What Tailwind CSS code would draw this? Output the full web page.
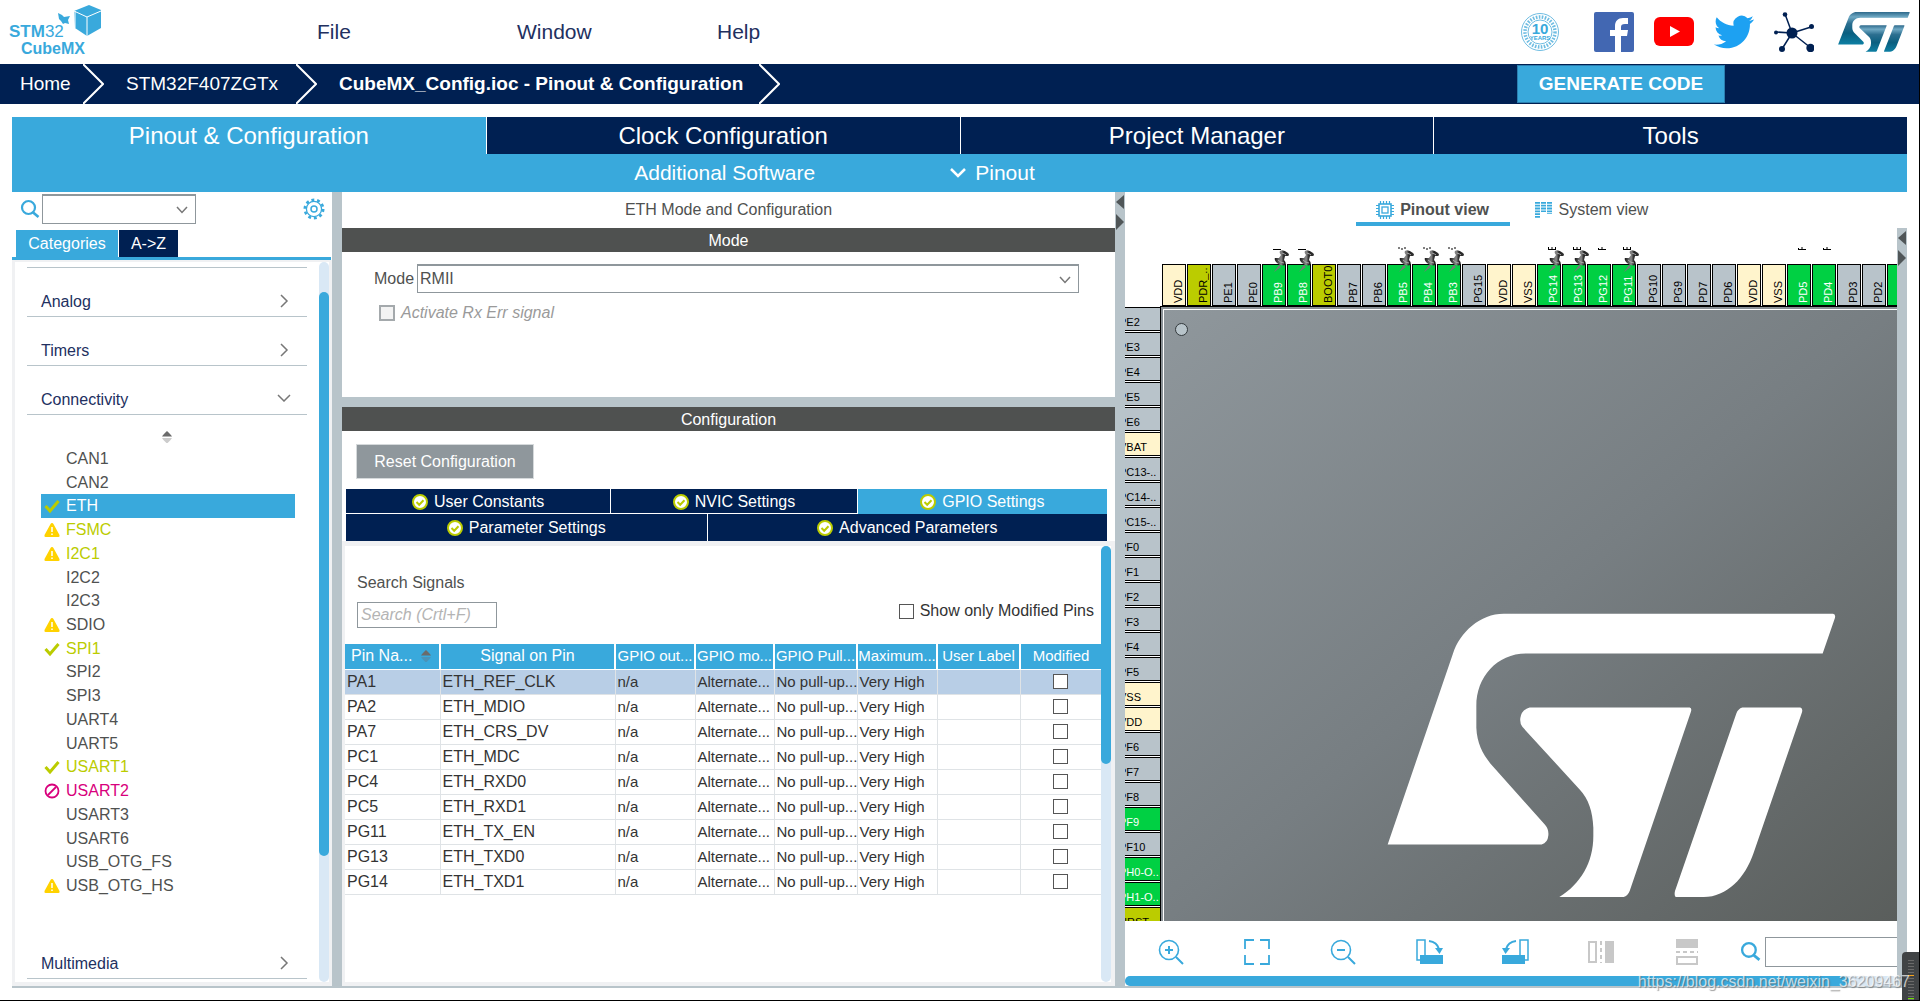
<!DOCTYPE html>
<html lang="en">
<head>
<meta charset="utf-8">
<title>STM32CubeMX - CubeMX_Config.ioc</title>
<script src="https://cdn.jsdelivr.net/npm/@tailwindcss/browser@4"></script>
</head>
<body class="relative flex h-screen flex-col overflow-hidden border-r border-b border-black bg-white font-['Liberation_Sans',Arial,sans-serif] text-[16px] leading-5 text-[#4f5150]">

<svg class="absolute size-0" aria-hidden="true">
  <defs>
    <linearGradient id="stFill" x1="0" y1="0" x2="0" y2="1"><stop offset="0" stop-color="#2f6a8c"/><stop offset=".15" stop-color="#6fa9c4"/><stop offset=".35" stop-color="#2c6f90"/><stop offset=".65" stop-color="#0a5f80"/><stop offset="1" stop-color="#0d7fa3"/></linearGradient>
    <linearGradient id="pinBody" x1="0" y1="0" x2="1" y2="0"><stop offset="0" stop-color="#111"/><stop offset=".45" stop-color="#8c8c8c"/><stop offset=".65" stop-color="#222"/><stop offset="1" stop-color="#333"/></linearGradient>
    <symbol id="st" viewBox="50 70 1350 856" preserveAspectRatio="none">
      <path d="M52 765L248 192C268 128 330 72 400 72H1388Q1396 72 1394 84L1357 192H468C380 192 318 262 318 350V415C320 460 336 492 360 522L524 706Q536 720 534 738Q532 760 514 765Z"/>
      <path d="M478 354H958Q965 356 962 366L778 905Q772 920 760 923H567C630 885 669 820 669 740V715C667 665 655 630 628 600L456 412Q448 402 450 385Q454 360 478 354Z"/>
      <path d="M1116 354H1290Q1298 356 1295 368L1150 790C1125 865 1070 923 1000 923H916Q911 918 914 905L1098 372Q1103 358 1116 354Z"/>
    </symbol>
    <symbol id="okBadge" viewBox="0 0 16 16"><circle cx="8" cy="8" r="7" fill="#fff" stroke="#bbcc00" stroke-width="2"/><path d="M4.500 8l2.700 2.700L11.500 6.200" fill="none" stroke="#bbcc00" stroke-width="2"/></symbol>
    <symbol id="check" viewBox="0 0 16 16"><path d="M1.500 8l4.500 5L14.500 3" fill="none" stroke="#bbcc00" stroke-width="3"/></symbol>
    <symbol id="warn" viewBox="0 0 16 16"><path d="M8 1Q9 1 9.600 2.200L15.500 13Q16 15 14.500 15H1.500Q0 15 .500 13L6.400 2.200Q7 1 8 1Z" fill="#ffd200"/><path d="M8 5v5M8 11.500v1.500" stroke="#fff" stroke-width="1.500"/></symbol>
    <symbol id="ban" viewBox="0 0 16 16"><circle cx="8" cy="8" r="6.500" fill="none" stroke="#d8007c" stroke-width="1.800"/><path d="M4 12L12 4" stroke="#d8007c" stroke-width="1.800"/></symbol>
    <symbol id="lens" viewBox="0 0 20 20"><circle cx="8.500" cy="8.500" r="6.500" fill="none" stroke="#39a9dc" stroke-width="2.200"/><path d="M12.500 13l6 5" stroke="#39a9dc" stroke-width="2.600"/></symbol>
    <symbol id="sort" viewBox="0 0 10 12"><path d="M0 5.500Q1 3.500 5 0Q9 3.500 10 5.500Z" fill="#6b6b6b"/><path d="M0 7H10Q9 9 5 12.500Q1 9 0 7Z" fill="currentColor"/></symbol>
    <symbol id="pushpin" viewBox="0 0 17 23"><path d="M6 15L1 22L8 17Z" fill="#777"/><path d="M7 1Q10-1 15 3Q17 5 15 6L12 6L11 10Q14 13 12 15Q8 17 3 12Q1 9 2 8L6 8L8 5Q6 3 7 1Z" fill="url(#pinBody)"/><path d="M9 3Q12 4 13 5M5 10Q8 13 11 13" stroke="#aaa" fill="none"/></symbol>
    <symbol id="sash" viewBox="0 0 10 40"><path d="M9 3V17L1 10Z" fill="#505658"/><path d="M1 22V38L9 30Z" fill="#505658"/></symbol>
  </defs>
</svg>

<header class="flex h-16 shrink-0 items-center text-[#22305f]">
  <a href="#" aria-label="STM32 CubeMX" class="w-[317px]">
    <svg class="h-16 w-[110px]" viewBox="0 0 110 64" fill="#39a9dc" font-family="'Liberation Sans Narrow','Liberation Sans',sans-serif" font-size="16">
      <text x="9" y="37" font-size="17"><tspan font-weight="700">STM</tspan><tspan>32</tspan></text>
      <text x="21" y="54" font-weight="700">CubeMX</text>
      <path d="M74 11L89 5l12 5v18L87 36 75 28Z"/><path d="M74 11l13 6 14-6M87 17V36M75 11v17" fill="none" stroke="#fff" stroke-width="1"/>
      <path d="M58 13l4 2 2 2 6-1-2 4 1 4-4-1-2 1-2-3-2-2Z"/>
    </svg>
  </a>
  <nav class="grid grid-cols-[200px_200px_120px] text-[21px]">
    <a href="#">File</a><a href="#">Window</a><a href="#">Help</a>
  </nav>
  <div class="ml-auto flex items-center gap-5 pr-[9px]">
    <a href="#" aria-label="10 years" class="mr-3.5"><svg class="size-10" viewBox="0 0 40 40" fill="none" stroke="#6fbde2">
      <circle cx="20" cy="20" r="18.500"/><circle cx="20" cy="20" r="15" stroke-width="3.500" stroke-dasharray="1.600 1.400"/><circle cx="20" cy="20" r="12"/>
      <text x="20" y="22" text-anchor="middle" font-size="15" font-weight="700" fill="#39a9dc" stroke="none">10</text>
      <text x="20" y="28" text-anchor="middle" font-size="6" font-weight="700" fill="#39a9dc" stroke="none">YEARS</text></svg></a>
    <a href="#" aria-label="Facebook"><svg class="size-10" viewBox="0 0 40 40"><rect width="40" height="40" rx="2" fill="#4267b2"/><path d="M21 40V24h-5v-6h5v-4c0-5 3-8 8-8h5v6h-3c-3 0-4 1-4 3v3h7l-1 6h-6v16Z" fill="#fff"/></svg></a>
    <a href="#" aria-label="YouTube"><svg class="size-10" viewBox="0 0 40 40"><rect y="5" width="40" height="29" rx="6" fill="red"/><path d="M16 14v11l10-5.500Z" fill="#fff"/></svg></a>
    <a href="#" aria-label="Twitter"><svg class="size-10" viewBox="0 0 24 24" fill="#1da1f2"><path d="M23.953 4.570a10 10 0 01-2.825.775 4.958 4.958 0 002.163-2.723c-.951.555-2.005.959-3.127 1.184a4.920 4.920 0 00-8.384 4.482C7.690 8.095 4.067 6.130 1.640 3.162a4.822 4.822 0 00-.666 2.475c0 1.710.870 3.213 2.188 4.096a4.904 4.904 0 01-2.228-.616v.060a4.923 4.923 0 003.946 4.827 4.996 4.996 0 01-2.212.085 4.936 4.936 0 004.604 3.417 9.867 9.867 0 01-6.102 2.105c-.390 0-.779-.023-1.170-.067a13.995 13.995 0 007.557 2.209c9.053 0 13.998-7.496 13.998-13.985 0-.210 0-.420-.015-.630A9.935 9.935 0 0024 4.590z"/></svg></a>
    <a href="#" aria-label="Community"><svg class="size-10" viewBox="0 0 40 40" fill="#002052" stroke="#002052" stroke-width="1.500"><path d="M18 21L11 2M18 21L37 15M18 21L2 20M18 21L8 37M18 21L37 36"/><g stroke="none"><circle cx="18" cy="21" r="5.500"/><circle cx="11" cy="2.500" r="2.300"/><circle cx="37.500" cy="14.500" r="2.500"/><circle cx="2" cy="20.500" r="2"/><circle cx="8" cy="37" r="3"/><circle cx="36.500" cy="36" r="4.200"/></g></svg></a>
    <a href="#" aria-label="STMicroelectronics" class="ml-1"><svg class="h-10 w-[72px]" fill="url(#stFill)"><use href="#st" width="72" height="40"/></svg></a>
  </div>
</header>

<nav class="flex h-10 shrink-0 items-center bg-[#002052] text-[19px] text-white" aria-label="Breadcrumb">
  <a href="#" class="w-[83px] pl-5">Home</a>
  <svg class="h-10 w-[21px]" viewBox="0 0 21 40" fill="none" stroke="#fff" stroke-width="2"><path d="M0 0L20 20L0 40"/></svg>
  <a href="#" class="w-[192px] pl-[22px]">STM32F407ZGTx</a>
  <svg class="h-10 w-[21px]" viewBox="0 0 21 40" fill="none" stroke="#fff" stroke-width="2"><path d="M0 0L20 20L0 40"/></svg>
  <a href="#" class="w-[442px] pl-[22px] font-bold whitespace-nowrap">CubeMX_Config.ioc - Pinout &amp; Configuration</a>
  <svg class="h-10 w-[21px]" viewBox="0 0 21 40" fill="none" stroke="#fff" stroke-width="2"><path d="M0 0L20 20L0 40"/></svg>
  <button class="mr-[194px] ml-auto h-[38px] w-[208px] border border-[#2b7fb0] bg-[#39a9dc] font-bold">GENERATE CODE</button>
</nav>

<main class="mx-3 mt-[13px] mb-3 flex min-h-0 flex-1 flex-col">
  <div class="grid h-[37px] shrink-0 grid-cols-4 text-[24px] text-white" role="tablist">
    <button role="tab" aria-selected="true" class="bg-[#39a9dc]">Pinout &amp; Configuration</button>
    <button role="tab" class="border-l border-white bg-[#002052]">Clock Configuration</button>
    <button role="tab" class="border-l border-white bg-[#002052]">Project Manager</button>
    <button role="tab" class="border-l border-white bg-[#002052]">Tools</button>
  </div>
  <div class="flex h-[38px] shrink-0 items-center justify-center gap-[134px] bg-[#39a9dc] pr-[250px] text-[21px] text-white">
    <button>Additional Software</button>
    <button class="flex items-center gap-2"><svg class="h-3 w-[18px]" viewBox="0 0 18 12" fill="none" stroke="#fff" stroke-width="2.500"><path d="M2 2l7 7 7-7"/></svg>Pinout</button>
  </div>

  <div class="flex min-h-0 flex-1 border-b-2 border-[#b8c4ca]">

    <aside class="flex w-[320px] shrink-0 flex-col">
      <div class="flex h-[38px] shrink-0 items-center pr-[7px] pb-1 pl-2">
        <svg class="size-5"><use href="#lens"/></svg>
        <div class="relative ml-0.5 h-[30px] w-[154px]">
          <select aria-label="Search peripheral" class="h-full w-full appearance-none border border-t-2 border-[#8f979c] bg-white"><option></option></select>
          <svg class="pointer-events-none absolute top-3 right-2 h-2 w-3" viewBox="0 0 12 8" fill="none" stroke="#777" stroke-width="1.500"><path d="M1 1l5 5.500L11 1"/></svg>
        </div>
        <button aria-label="Settings" class="ml-auto"><svg class="size-[22px]" viewBox="0 0 22 22" fill="none" stroke="#39a9dc"><circle cx="11" cy="11" r="9.200" stroke-width="2.600" stroke-dasharray="2.890 2.890"/><circle cx="11" cy="11" r="7.600" stroke-width="1.300"/><circle cx="11" cy="11" r="3" stroke-width="1.500"/></svg></button>
      </div>
      <div class="ml-1 flex h-[27px] shrink-0 gap-px text-white" role="tablist">
        <button role="tab" aria-selected="true" class="w-[102px] bg-[#39a9dc]">Categories</button>
        <button role="tab" class="w-[59px] bg-[#002052]">A-&gt;Z</button>
      </div>
      <div class="mr-px h-[3px] shrink-0 bg-[#39a9dc]"></div>
      <div class="flex min-h-0 flex-1 border-x-[3px] border-t-2 border-b-4 border-[#f0f1f3]">
        <div class="flex flex-1 flex-col px-3 pt-[5px] text-[#22305f]">
          <div class="h-px shrink-0 bg-[#b8c4ca]"></div>
          <button class="flex h-[49px] shrink-0 items-end justify-between border-b border-[#b8c4ca] pr-[18px] pb-1 pl-3.5">Analog<svg class="mb-1 h-3.5 w-2.5" viewBox="0 0 10 14" fill="none" stroke="#777" stroke-width="1.500"><path d="M2 1l6 6-6 6"/></svg></button>
          <button class="flex h-[49px] shrink-0 items-end justify-between border-b border-[#b8c4ca] pr-[18px] pb-1 pl-3.5">Timers<svg class="mb-1 h-3.5 w-2.5" viewBox="0 0 10 14" fill="none" stroke="#777" stroke-width="1.500"><path d="M2 1l6 6-6 6"/></svg></button>
          <button aria-expanded="true" class="flex h-[49px] shrink-0 items-end justify-between border-b border-[#b8c4ca] pr-4 pb-1 pl-3.5">Connectivity<svg class="mb-2 h-2 w-3.5" viewBox="0 0 14 8" fill="none" stroke="#777" stroke-width="1.500"><path d="M1 1l6 6 6-6"/></svg></button>
          <div class="flex h-[32px] shrink-0 items-end justify-center pb-1 text-[#ccc]"><svg class="h-3 w-2.5"><use href="#sort"/></svg></div>
          <ul id="peripherals" class="grid h-[451px] shrink-0 auto-rows-fr pr-3 pl-3.5 text-[#4f5150]"></ul>
          <button class="mt-auto mb-[3px] flex h-[49px] shrink-0 items-end justify-between border-b border-[#b8c4ca] pr-[18px] pb-1 pl-3.5">Multimedia<svg class="mb-1 h-3.5 w-2.5" viewBox="0 0 10 14" fill="none" stroke="#777" stroke-width="1.500"><path d="M2 1l6 6-6 6"/></svg></button>
        </div>
        <div class="w-2.5 rounded-full bg-[#d9e8f5] pt-[30px]"><div class="h-[564px] rounded-full bg-[#39a9dc]"></div></div>
      </div>
    </aside>

    <div class="w-2.5 shrink-0 bg-[#b8c4ca]"></div>

    <section class="flex min-w-0 flex-[773] flex-col">
      <h1 class="flex h-9 shrink-0 items-center justify-center">ETH Mode and Configuration</h1>
      <h2 class="h-6 shrink-0 bg-[#4f5150] pt-[3px] text-center text-white">Mode</h2>
      <div class="h-[145px] shrink-0 pt-3 pr-9 pl-8">
        <div class="flex items-center gap-[3px]">
          <label for="mode">Mode</label>
          <div class="relative h-[29px] flex-1">
            <select id="mode" class="h-full w-full appearance-none border border-t-2 border-[#8f979c] bg-white pl-0.5"><option>RMII</option></select>
            <svg class="pointer-events-none absolute top-3 right-2 h-2 w-3" viewBox="0 0 12 8" fill="none" stroke="#777" stroke-width="1.500"><path d="M1 1l5 5.500L11 1"/></svg>
          </div>
        </div>
        <label class="mt-2.5 flex items-center gap-1.5 pl-[5px] text-[#9a9a9a] italic"><input type="checkbox" disabled class="size-4 appearance-none border-2 border-[#a4a9ac] bg-[#f3f3f3]">Activate Rx Err signal</label>
      </div>
      <div class="h-2.5 shrink-0 bg-[#b8c4ca]"></div>
      <h2 class="h-6 shrink-0 bg-[#4f5150] pt-[3px] text-center text-white">Configuration</h2>
      <div class="h-[58px] shrink-0 pt-[13px] pl-3.5"><button class="h-[35px] w-[178px] border border-[#d5d9db] bg-[#8f979c] text-white">Reset Configuration</button></div>
      <div class="mr-2 ml-1 flex h-[52px] shrink-0 flex-col text-white" role="tablist">
        <div class="flex h-[25px]">
          <button role="tab" class="mb-px flex flex-[265] items-center justify-center gap-1.5 bg-[#002052] pt-0.5"><svg class="size-4"><use href="#okBadge"/></svg>User Constants</button>
          <button role="tab" class="mb-px flex flex-[246] items-center justify-center gap-1.5 border-l border-white bg-[#002052] pt-0.5"><svg class="size-4"><use href="#okBadge"/></svg>NVIC Settings</button>
          <button role="tab" aria-selected="true" class="flex flex-[250] items-center justify-center gap-1.5 border-l border-white bg-[#39a9dc]"><svg class="size-4"><use href="#okBadge"/></svg>GPIO Settings</button>
        </div>
        <div class="flex h-[27px]">
          <button role="tab" class="flex flex-[361] items-center justify-center gap-1.5 bg-[#002052]"><svg class="size-4"><use href="#okBadge"/></svg>Parameter Settings</button>
          <button role="tab" class="flex flex-[400] items-center justify-center gap-1.5 border-l border-white bg-[#002052]"><svg class="size-4"><use href="#okBadge"/></svg>Advanced Parameters</button>
        </div>
      </div>
      <div class="flex min-h-0 flex-1 border-t-[5px] border-r-4 border-b-4 border-l-[3px] border-[#f0f1f3]">
        <div class="min-w-0 flex-1">
          <div class="flex h-[98px] items-start justify-between pt-[27px] pr-[7px] pl-3">
            <div class="flex flex-col gap-[9px]">
              <label for="signals">Search Signals</label>
              <input id="signals" placeholder="Search (Crtl+F)" class="h-[26px] w-[140px] border border-[#8f979c] px-[3px] italic placeholder:text-[#b4b4b4]">
            </div>
            <label class="mt-7 flex items-center gap-1.5 text-[#333]"><input type="checkbox" class="size-[15px] appearance-none border border-[#555] bg-white">Show only Modified Pins</label>
          </div>
          <table class="w-full table-fixed border-collapse text-[15px] text-[#333]">
            <colgroup><col class="w-[95px]"><col class="w-[175px]"><col class="w-[80px]"><col class="w-[79px]"><col class="w-[83px]"><col class="w-[80px]"><col class="w-[83px]"><col class="w-[81px]"></colgroup>
            <thead>
              <tr class="h-[25px] border-b border-white bg-[#39a9dc] whitespace-nowrap text-white">
                <th class="border-r-2 border-white p-0 font-normal"><span class="flex items-center justify-between pr-2 pl-1.5 text-[16px]">Pin Na...<svg class="h-3 w-2.5 text-[#4b93b8]"><use href="#sort"/></svg></span></th>
                <th class="border-r-2 border-white p-0 text-[16px] font-normal">Signal on Pin</th>
                <th class="border-r-2 border-white p-0 font-normal">GPIO out...</th>
                <th class="border-r-2 border-white p-0 font-normal">GPIO mo...</th>
                <th class="border-r-2 border-white p-0 font-normal">GPIO Pull...</th>
                <th class="border-r-2 border-white p-0 font-normal">Maximum...</th>
                <th class="border-r-2 border-white p-0 font-normal">User Label</th>
                <th class="p-0 font-normal">Modified</th>
              </tr>
            </thead>
            <tbody id="signalsBody"></tbody>
          </table>
        </div>
        <div class="w-2.5 shrink-0 rounded-full bg-[#d9e8f5]"><div class="h-[218px] rounded-full bg-[#39a9dc]"></div></div>
      </div>
    </section>

    <div class="w-2.5 shrink-0 bg-[#b8c4ca]"><svg class="h-10 w-2.5"><use href="#sash"/></svg></div>

    <section class="flex min-w-0 flex-[782] flex-col">
      <div class="flex h-9 shrink-0 items-stretch justify-center gap-[25px] pr-7" role="tablist">
        <button role="tab" aria-selected="true" class="mb-0.5 flex w-[154px] items-center justify-center gap-1.5 border-b-4 border-[#39a9dc] pt-1.5 font-bold"><svg class="size-[18px]" viewBox="0 0 18 18" fill="none" stroke="#39a9dc"><path d="M4.500 0v18M7.500 0v18M10.500 0v18M13.500 0v18M0 4.500h18M0 7.500h18M0 10.500h18M0 13.500h18" stroke-width="1.200"/><rect x="3" y="3" width="12" height="12" fill="#fff" stroke-width="1.600"/><rect x="6" y="6" width="6" height="6" stroke-width="1.300"/></svg>Pinout view</button>
        <button role="tab" class="mb-0.5 flex items-center gap-1.5 border-b-4 border-transparent pt-1.5"><svg class="size-[18px]" viewBox="0 0 18 18" fill="none" stroke="#39a9dc" stroke-width="5" stroke-dasharray="1.800 1"><path d="M2.500 1v16M8.500 1v10M14.500 1v12"/></svg>System view</button>
      </div>
      <div class="flex min-h-0 flex-1">
        <div class="flex min-w-0 flex-1 flex-col">
          <div class="flex min-h-0 flex-1 flex-col overflow-hidden">
            <div id="topPins" class="flex h-[78px] shrink-0 items-end gap-px pl-[37px] text-[11px] leading-3"></div>
            <div class="flex min-h-0 flex-1">
              <div id="leftPins" class="flex w-[35px] shrink-0 flex-col items-end gap-px overflow-hidden pt-px text-[11px] leading-3"></div>
              <div class="relative flex-1 overflow-hidden border-t border-l border-black bg-[#8a9196] pt-0.5 pl-0.5">
                <div class="relative h-full w-full border-t border-l border-white bg-linear-to-br from-[#8f979c] via-[#777e82] to-[#5a5e5c]">
                  <div class="absolute top-[13px] left-[11px] size-[13px] rounded-full border border-[#33393c] bg-[#b8c4ca]"></div>
                  <svg class="absolute top-[303px] left-[223px] h-[285px] w-[450px]" fill="#fff"><use href="#st" width="450" height="285"/></svg>
                </div>
              </div>
            </div>
          </div>
          <div class="flex h-[55px] shrink-0 items-center overflow-hidden pt-1.5 pl-[33px]">
            <button aria-label="Zoom in" class="w-[86px] shrink-0"><svg class="size-[26px]" viewBox="0 0 26 26" fill="none" stroke="#39a9dc" stroke-width="1.600"><circle cx="11" cy="11" r="9.500"/><path d="M18 18l7 7M11 7v8M7 11h8" stroke-width="2"/></svg></button>
            <button aria-label="Best fit" class="w-[86px] shrink-0"><svg class="size-[26px]" viewBox="0 0 26 26" fill="none" stroke="#39a9dc" stroke-width="1.800"><path d="M1 10V1h9M16 1h9v9M25 16v9h-9M10 25H1v-9"/></svg></button>
            <button aria-label="Zoom out" class="w-[86px] shrink-0"><svg class="size-[26px]" viewBox="0 0 26 26" fill="none" stroke="#39a9dc" stroke-width="1.600"><circle cx="11" cy="11" r="9.500"/><path d="M18 18l7 7M7 11h8" stroke-width="2"/></svg></button>
            <button aria-label="Rotate clockwise" class="w-[86px] shrink-0"><svg class="h-[26px] w-[27px]" viewBox="0 0 27 26" fill="none" stroke="#39a9dc" stroke-width="1.500"><path d="M1 1h8v20H1Z"/><path d="M4 16h23v9H4Z" fill="#39a9dc" stroke="none"/><path d="M13 2q8 1 10 8" stroke-width="2"/><path d="M19 9h8l-3.500 6Z" fill="#39a9dc" stroke="none"/></svg></button>
            <button aria-label="Rotate counter-clockwise" class="w-[86px] shrink-0"><svg class="h-[26px] w-[27px]" viewBox="0 0 27 26" fill="none" stroke="#39a9dc" stroke-width="1.500"><path d="M18 1h8v20h-8Z"/><path d="M0 16h23v9H0Z" fill="#39a9dc" stroke="none"/><path d="M14 2q-8 1-10 8" stroke-width="2"/><path d="M0 9h8L3.500 15Z" fill="#39a9dc" stroke="none"/></svg></button>
            <button aria-label="Flip horizontally" class="w-[86px] shrink-0"><svg class="size-[26px]" viewBox="0 0 26 26" fill="none" stroke="#c8c8c8" stroke-width="2"><path d="M1 3h7v20H1Z"/><path d="M13 2v22" stroke-dasharray="4 3"/><path d="M17 2h9v22h-9Z" fill="#c8c8c8" stroke="none"/></svg></button>
            <button aria-label="Flip vertically" class="w-[66px] shrink-0"><svg class="size-[26px]" viewBox="0 0 26 26" fill="none" stroke="#c8c8c8" stroke-width="2"><path d="M2 0h22v9H2Z" fill="#c8c8c8" stroke="none"/><path d="M2 13h22" stroke-dasharray="4 3"/><path d="M3 18h20v7H3Z"/></svg></button>
            <label for="pinSearch" class="mr-1 shrink-0"><svg class="size-[21px]" viewBox="0 0 20 20"><use href="#lens"/></svg></label>
            <input id="pinSearch" aria-label="Search pin" class="h-[30px] min-w-0 flex-1 border border-r-0 border-[#8f979c]">
          </div>
          <div class="h-2.5 shrink-0 rounded-full bg-[#d9e8f5] pr-12"><div class="h-full rounded-full bg-[#39a9dc]"></div></div>
        </div>
        <div class="w-2.5 shrink-0 bg-[#b8c4ca]"><svg class="h-10 w-2.5"><use href="#sash"/></svg></div>
      </div>
    </section>
  </div>
</main>

<div class="absolute right-0 bottom-0 flex h-12 w-[17px] flex-col items-center rounded-tl bg-[#404345] pt-2" aria-hidden="true">
  <svg class="h-10 w-2.5" viewBox="0 0 10 40" stroke-width="1"><path d="M5 0V40" stroke="#6a6a6a" stroke-width="6" stroke-dasharray="1 2"/><path d="M2 15.500h6" stroke="#f7a21b"/><path d="M2 38.500h6" stroke="#6fe000"/></svg>
</div>
<p class="absolute right-[9px] bottom-2 text-white/70 [text-shadow:1px_1px_1px_rgba(90,90,90,0.6)]">https://blog.csdn.net/weixin_36209467</p>

<script>
  // Peripheral list: name, text colour, status icon
  const peripherals = [
    ['CAN1'], ['CAN2'], ['ETH', 'sel', 'check'], ['FSMC', 'on', 'warn'], ['I2C1', 'on', 'warn'], ['I2C2'], ['I2C3'],
    ['SDIO', '', 'warn'], ['SPI1', 'on', 'check'], ['SPI2'], ['SPI3'], ['UART4'], ['UART5'], ['USART1', 'on', 'check'],
    ['USART2', 'bad', 'ban'], ['USART3'], ['USART6'], ['USB_OTG_FS'], ['USB_OTG_HS', '', 'warn']
  ];
  const tone = { sel: 'bg-[#39a9dc] text-white', on: 'text-[#bbcc00]', bad: 'text-[#d8007c]' };
  document.getElementById('peripherals').innerHTML = peripherals.map(([name, state, icon]) =>
    `<li class="flex items-center gap-1.5 pl-[3px] ${tone[state] || ''}"><svg class="size-4 shrink-0">${icon ? `<use href="#${icon}"/>` : ''}</svg>${name}</li>`).join('');

  // GPIO signal table
  const signals = [['PA1', 'ETH_REF_CLK'], ['PA2', 'ETH_MDIO'], ['PA7', 'ETH_CRS_DV'], ['PC1', 'ETH_MDC'], ['PC4', 'ETH_RXD0'],
    ['PC5', 'ETH_RXD1'], ['PG11', 'ETH_TX_EN'], ['PG13', 'ETH_TXD0'], ['PG14', 'ETH_TXD1']];
  const cell = (text, wide) => `<td class="border-r border-[#dfe3e6] py-0 pr-0 pl-0.5 whitespace-nowrap ${wide ? 'text-[16px]' : ''}">${text}</td>`;
  document.getElementById('signalsBody').innerHTML = signals.map(([pin, sig], i) =>
    `<tr class="h-[25px] border-b border-[#dfe3e6] ${i ? '' : 'bg-[#b8cee6]'}">${cell(pin, true)}${cell(sig, true)}${cell('n/a')}${cell('Alternate...')}${cell('No pull-up...')}${cell('Very High')}${cell('')}` +
    `<td class="border-r border-[#dfe3e6] p-0"><input type="checkbox" aria-label="${pin} modified" class="mx-auto block size-[15px] appearance-none border border-[#555] bg-white"></td></tr>`).join('');

  // Chip pins: label, kind (p power, b boot, g assigned, n free), pinned, signal mark
  const fill = { p: 'bg-[#fff4cc] text-black', b: 'bg-[#bbcc00] text-black', g: 'bg-[#00d043] text-white', n: 'bg-[#b8c3ca] text-black' };
  const marks = { i: 'M0 2.500h8', o: 'M0 1h2M3 2h2M6 1h2', E: 'M0 2.500h8M.500 0v2M4 0v2M7.500 0v2', F: 'M0 2.500h8M4 0v2M.500 1v1' };
  const topRow = [['VDD', 'p'], ['PDR_..', 'b'], ['PE1', 'n'], ['PE0', 'n'], ['PB9', 'g', 1, 'i'], ['PB8', 'g', 1, 'i'], ['BOOT0', 'b'], ['PB7', 'n'],
    ['PB6', 'n'], ['PB5', 'g', 1, 'o'], ['PB4', 'g', 1, 'o'], ['PB3', 'g', 1, 'o'], ['PG15', 'n'], ['VDD', 'p'], ['VSS', 'p'], ['PG14', 'g', 1, 'E'],
    ['PG13', 'g', 1, 'E'], ['PG12', 'g', 0, 'F'], ['PG11', 'g', 1, 'E'], ['PG10', 'n'], ['PG9', 'n'], ['PD7', 'n'], ['PD6', 'n'], ['VDD', 'p'],
    ['VSS', 'p'], ['PD5', 'g', 0, 'F'], ['PD4', 'g', 0, 'F'], ['PD3', 'n'], ['PD2', 'n'], ['', 'g']];
  document.getElementById('topPins').innerHTML = topRow.map(([name, kind, pinned, mark]) =>
    `<div class="relative flex h-[42px] w-6 shrink-0 items-center border border-black pt-0 pb-px pl-[9px] ${fill[kind]}"><span class="h-full rotate-180 pt-px whitespace-nowrap [writing-mode:vertical-rl]">${name}</span>` +
    (mark ? `<svg class="absolute -top-[18px] left-2.5 h-[3px] w-2" viewBox="0 0 8 3" stroke="#000" fill="none"><path d="${marks[mark]}"/></svg>` : '') +
    (pinned ? '<svg class="absolute -top-[15px] left-2.5 z-10 h-[23px] w-[17px]"><use href="#pushpin"/></svg>' : '') + '</div>').join('');

  const leftColumn = [['PE2', 'n'], ['PE3', 'n'], ['PE4', 'n'], ['PE5', 'n'], ['PE6', 'n'], ['VBAT', 'p'], ['PC13-..', 'n'], ['PC14-..', 'n'], ['PC15-..', 'n'],
    ['PF0', 'n'], ['PF1', 'n'], ['PF2', 'n'], ['PF3', 'n'], ['PF4', 'n'], ['PF5', 'n'], ['VSS', 'p'], ['VDD', 'p'], ['PF6', 'n'], ['PF7', 'n'], ['PF8', 'n'],
    ['PF9', 'g'], ['PF10', 'n'], ['PH0-O..', 'g'], ['PH1-O..', 'g'], ['NRST', 'b']];
  document.getElementById('leftPins').innerHTML = leftColumn.map(([name, kind]) =>
    `<div class="h-6 w-[42px] shrink-0 border-y border-black pt-2 pl-px whitespace-nowrap ${fill[kind]}">${name}</div>`).join('');
</script>
</body>
</html>
